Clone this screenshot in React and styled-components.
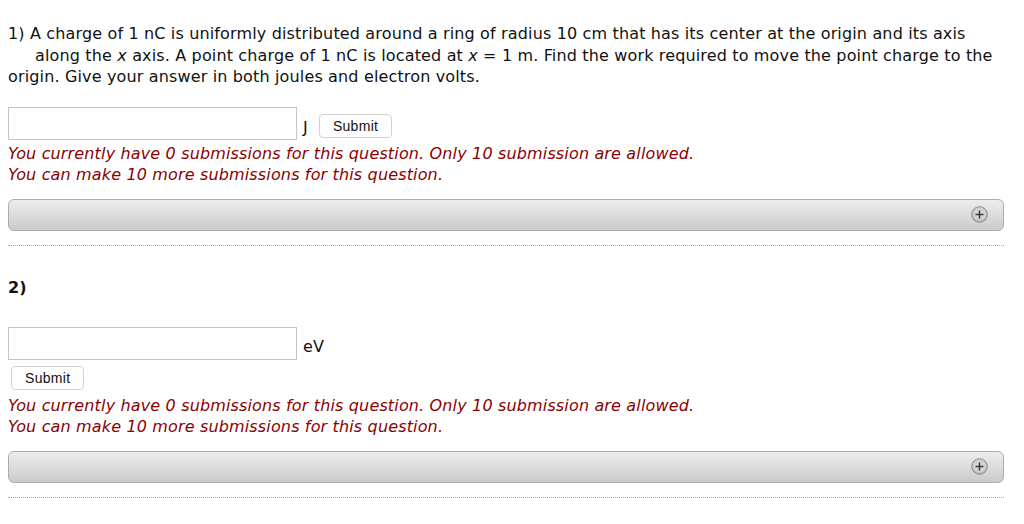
import React from 'react';
import styled, { createGlobalStyle } from 'styled-components';

const GlobalStyle = createGlobalStyle`
  body {
    margin: 0;
    background: #fff;
    font-family: "DejaVu Sans", Verdana, sans-serif;
    font-size: 16px;
    letter-spacing: 0.15px;
    color: #111;
  }
`;

const Page = styled.div`
  padding: 23px 20px 0 8px;
`;

const Question = styled.div`
  line-height: 21.5px;
  white-space: nowrap;
`;

const Line = styled.div`
  padding-left: ${({ $indent }) => ($indent ? '27px' : '0')};
`;

const AnswerRow = styled.div`
  display: flex;
  align-items: ${({ $top }) => ($top ? 'flex-start' : 'flex-end')};
  gap: 6px;
  margin-top: ${({ $mt }) => $mt}px;
`;

const Input = styled.input`
  width: 289px;
  height: 33px;
  box-sizing: border-box;
  border: 1px solid #c4c4c4;
  background: #fff;
  margin: 0;
`;

const Unit = styled.span`
  font-size: 16px;
  line-height: 22px;
  margin-bottom: ${({ $mb }) => $mb || 0}px;
  padding-top: ${({ $pt }) => $pt || 0}px;
`;

const SubmitButton = styled.button`
  font-family: "Liberation Sans", Arial, sans-serif;
  font-size: 14px;
  letter-spacing: 0.3px;
  color: #111;
  height: 24px;
  padding: 0 13px;
  background: #fff;
  border: 1px solid #d2d2d2;
  border-radius: 4px;
  margin: ${({ $m }) => $m || '0'};
`;

const Notice = styled.div`
  color: #8b0000;
  font-style: italic;
  line-height: 21px;
  white-space: nowrap;
  margin-top: ${({ $mt }) => $mt || 0}px;
`;

const Toggle = styled.div`
  height: 32px;
  box-sizing: border-box;
  border: 1px solid #ababab;
  border-radius: 6px;
  background: linear-gradient(#ededed, #cbcbcb);
  display: flex;
  justify-content: flex-end;
  align-items: center;
  padding-right: 15px;
  margin-top: 14px;
`;

const Divider = styled.div`
  border-top: 1px dotted #a8a8a8;
  margin-top: 14px;
`;

const PlusIcon = () => (
  <svg width="17" height="17" viewBox="0 0 17 17">
    <defs>
      <radialGradient id="pg" cx="50%" cy="45%" r="55%">
        <stop offset="0%" stopColor="#e4e4e4" />
        <stop offset="70%" stopColor="#cfcfcf" />
        <stop offset="100%" stopColor="#a9a9a9" />
      </radialGradient>
    </defs>
    <circle cx="8.5" cy="8.5" r="7.8" fill="url(#pg)" stroke="#8f8f8f" strokeWidth="1" />
    <path d="M8.5 4.5v8M4.5 8.5h8" stroke="#3a3a3a" strokeWidth="1.6" />
  </svg>
);

const QuestionNumber = styled.div`
  margin-top: 31px;
  line-height: 22px;
  font-weight: bold;
`;

const Part = ({ unit, inline }) => (
  <>
    {inline ? (
      <AnswerRow $mt={19}>
        <Input />
        <Unit $mb={1}>{unit}</Unit>
        <SubmitButton $m="0 0 2px 5px">Submit</SubmitButton>
      </AnswerRow>
    ) : (
      <>
        <AnswerRow $mt={28} $top>
          <Input />
          <Unit $pt={9}>{unit}</Unit>
        </AnswerRow>
        <SubmitButton $m="6px 0 0 3px">Submit</SubmitButton>
      </>
    )}
    <Notice $mt={inline ? 3 : 5}>
      You currently have 0 submissions for this question. Only 10 submission are allowed.
    </Notice>
    <Notice>You can make 10 more submissions for this question.</Notice>
    <Toggle>
      <PlusIcon />
    </Toggle>
    <Divider />
  </>
);

export default function App() {
  return (
    <>
      <GlobalStyle />
      <Page>
        <Question>
          <Line>
            1) A charge of 1 nC is uniformly distributed around a ring of radius 10 cm that has its center at the origin and its axis
          </Line>
          <Line $indent>
            along the <i>x</i> axis. A point charge of 1 nC is located at <i>x</i> = 1 m. Find the work required to move the point charge to the
          </Line>
          <Line>origin. Give your answer in both joules and electron volts.</Line>
        </Question>
        <Part unit="J" inline />
        <QuestionNumber>2)</QuestionNumber>
        <Part unit="eV" />
      </Page>
    </>
  );
}
